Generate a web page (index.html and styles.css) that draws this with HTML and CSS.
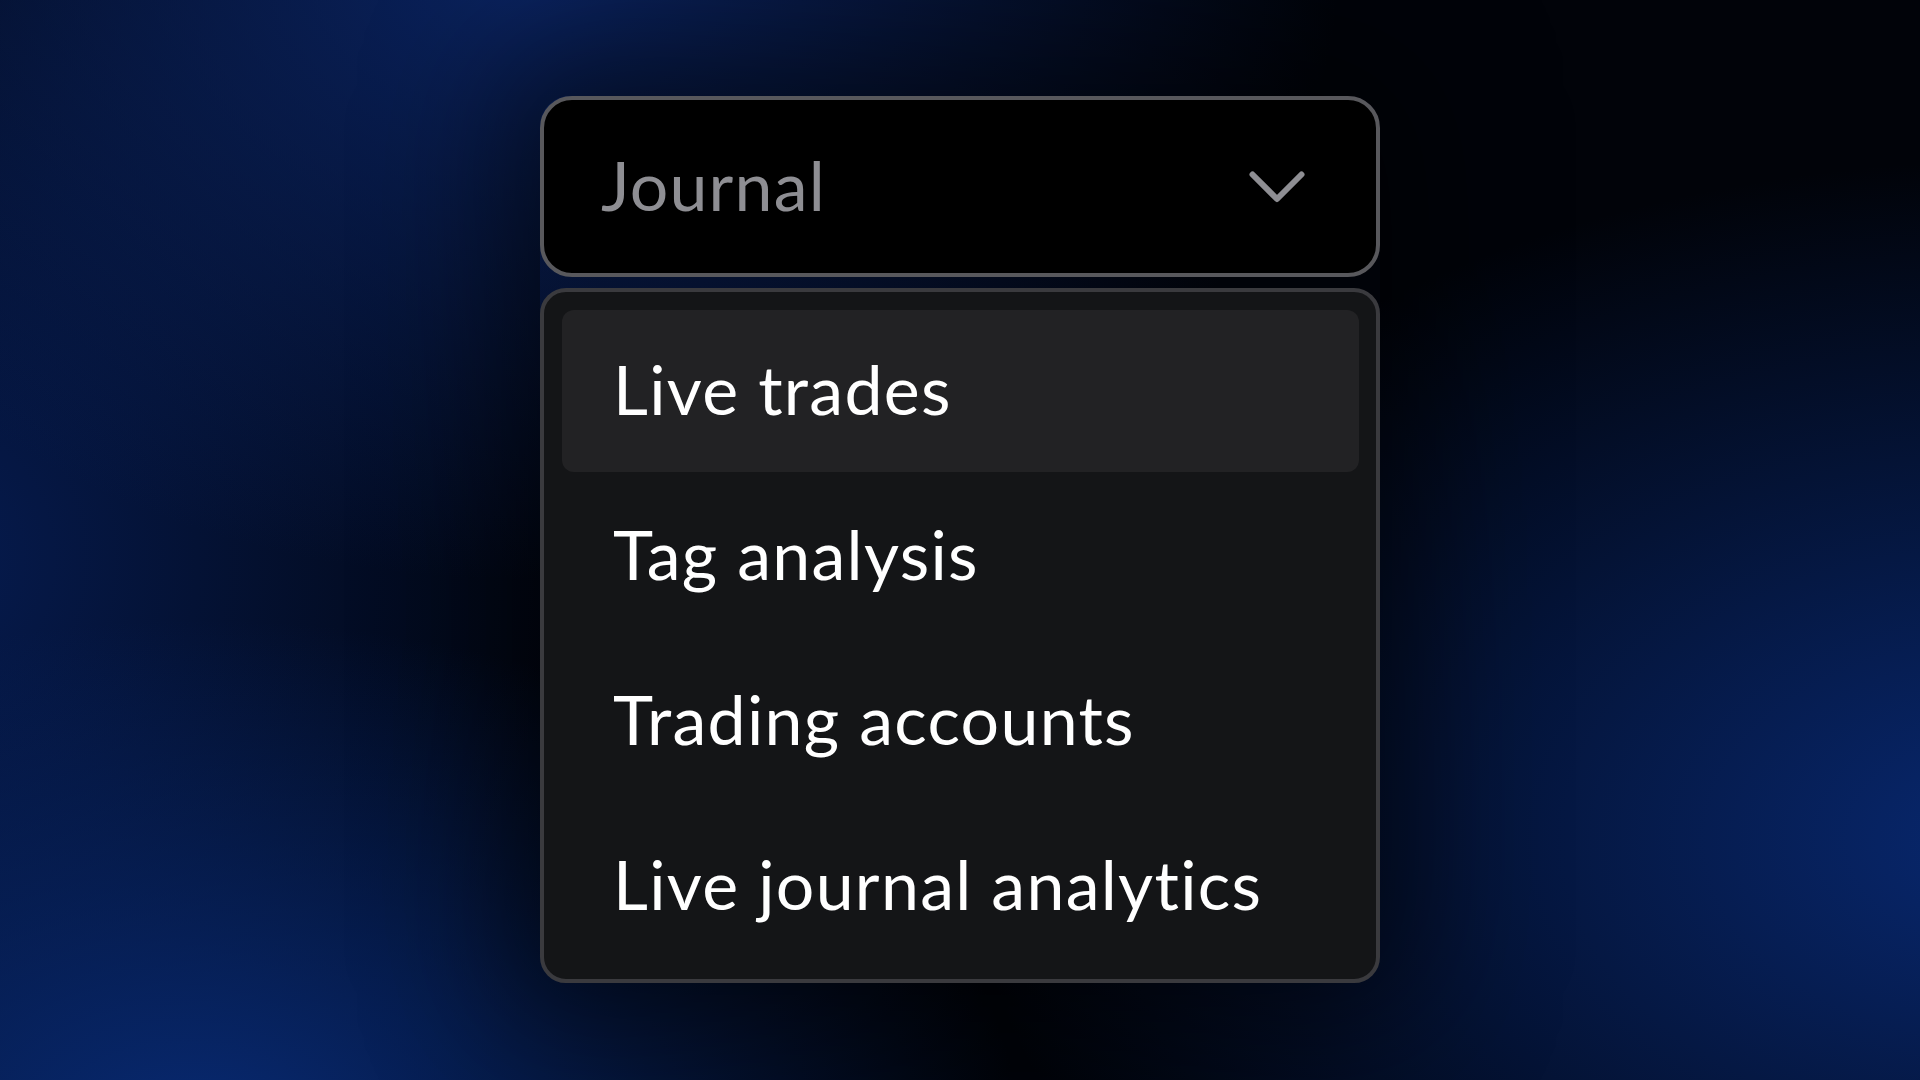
FILE: index.html
```html
<!DOCTYPE html>
<html lang="en">
<head>
<meta charset="utf-8">
<title>Journal dropdown</title>
<link rel="stylesheet" href="styles.css">
</head>
<body>
<main class="stage">
  <div class="dropdown">
    <button class="trigger" type="button">
      <span class="trigger-label">Journal</span>
      <svg class="chevron" width="56" height="32" viewBox="0 0 56 32" aria-hidden="true">
        <path d="M3.5 3.5 L28 28 L52.5 3.5" fill="none" stroke="#8e8e93" stroke-width="6" stroke-linecap="round" stroke-linejoin="round"/>
      </svg>
    </button>
    <ul class="menu">
      <li class="menu-item is-active">Live trades</li>
      <li class="menu-item">Tag analysis</li>
      <li class="menu-item">Trading accounts</li>
      <li class="menu-item">Live journal analytics</li>
    </ul>
  </div>
</main>
</body>
</html>
```

FILE: styles.css
```css
* {
  box-sizing: border-box;
}

html, body {
  margin: 0;
  padding: 0;
  width: 1920px;
  height: 1080px;
  overflow: hidden;
}

body {
  font-family: "Lato", "Noto Sans", sans-serif;
  font-variant-ligatures: none;
  background:
    radial-gradient(ellipse 820px 620px at 520px -40px, rgba(11, 38, 104, 0.92), rgba(11, 38, 104, 0) 100%),
    radial-gradient(ellipse 1050px 680px at 2020px 840px, rgba(8, 40, 112, 1), rgba(8, 40, 112, 0) 100%),
    radial-gradient(ellipse 820px 520px at 200px 1140px, rgba(8, 42, 115, 1), rgba(8, 42, 115, 0) 100%),
    radial-gradient(ellipse 700px 820px at -60px 560px, rgba(6, 28, 82, 0.95), rgba(6, 28, 82, 0) 100%),
    #010309;
}

.stage {
  width: 1920px;
  height: 1080px;
  display: flex;
  justify-content: center;
  padding-top: 96px;
}

.dropdown {
  width: 840px;
  display: flex;
  flex-direction: column;
  gap: 11px;
  height: 887px;
  border-radius: 30px;
  box-shadow: 0 0 130px 40px rgba(0, 0, 0, 0.5);
}

.trigger {
  width: 840px;
  height: 181px;
  margin: 0;
  background: #000;
  border: 4px solid #58585c;
  border-radius: 32px;
  display: flex;
  align-items: center;
  justify-content: space-between;
  padding: 0 71px 0 57px;
  font: inherit;
  cursor: pointer;
}

.trigger-label {
  font-size: 68px;
  line-height: 1;
  letter-spacing: 1.2px;
  color: #8e8e93;
  font-weight: 400;
  padding-bottom: 4px;
}

.chevron {
  display: block;
  flex: none;
}

.menu {
  list-style: none;
  margin: 0;
  width: 840px;
  background: #141517;
  border: 4px solid #3a3a3e;
  border-radius: 26px;
  padding: 18px 17px 12px 18px;
  display: flex;
  flex-direction: column;
  gap: 3px;
}

.menu-item {
  height: 162px;
  display: flex;
  align-items: center;
  padding-left: 51px;
  padding-bottom: 4px;
  font-size: 68px;
  line-height: 1;
  letter-spacing: 1.3px;
  color: #ffffff;
  border-radius: 12px;
}

.menu-item.is-active {
  background: #222224;
}
```
